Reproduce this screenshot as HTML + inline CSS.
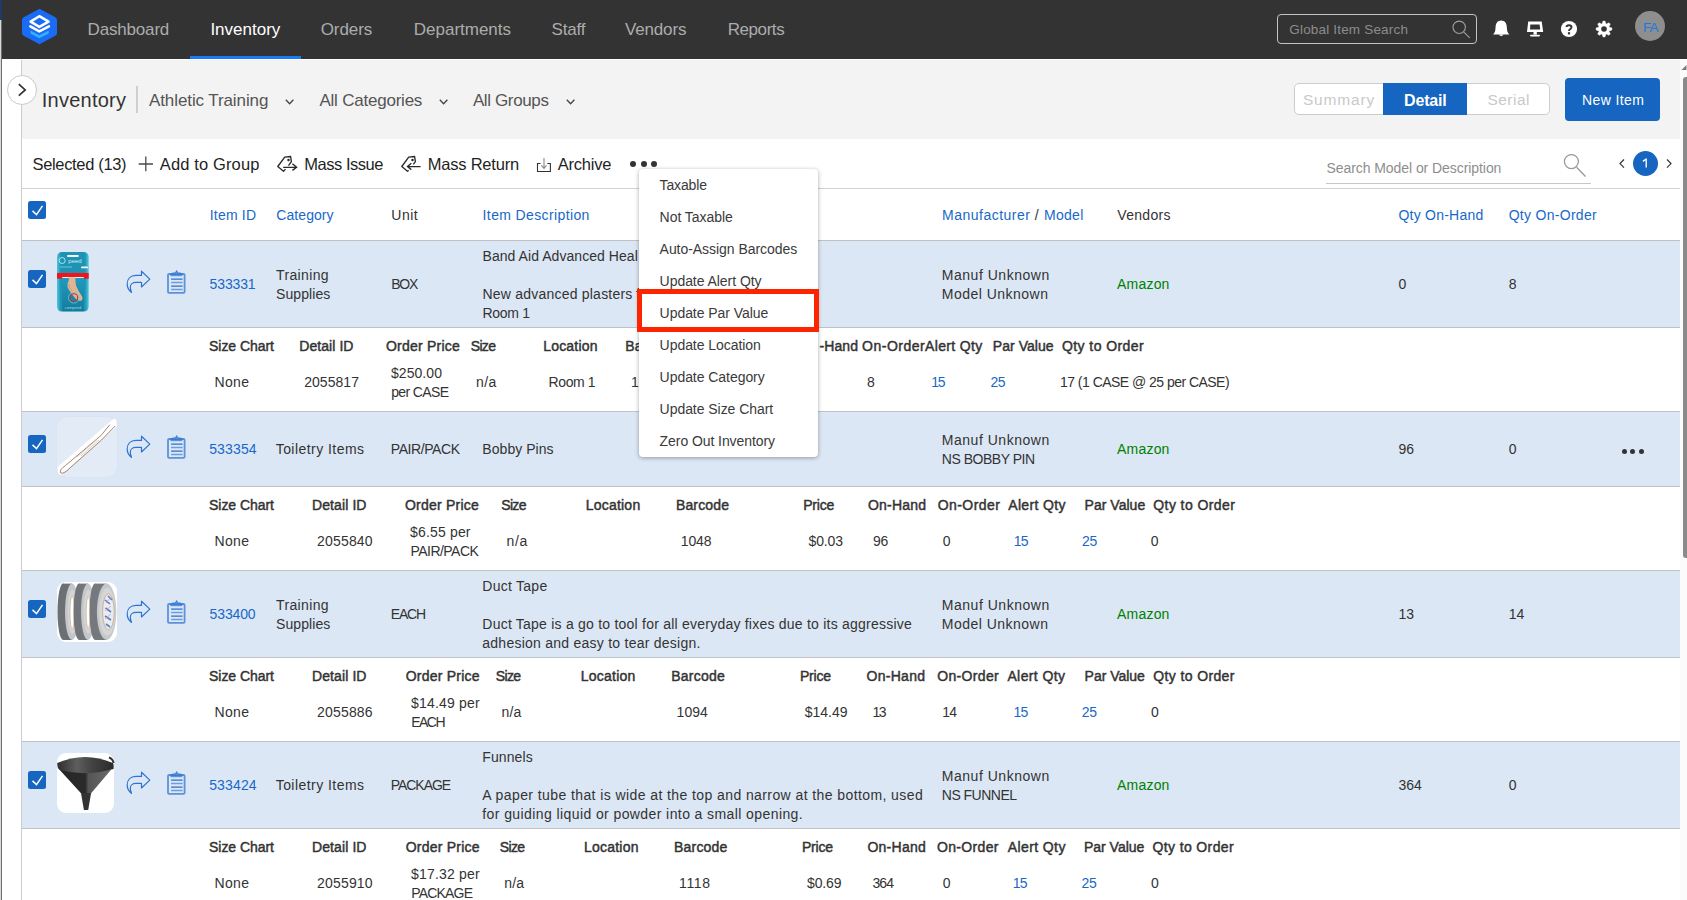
<!DOCTYPE html><html><head><meta charset="utf-8"><style>
html,body{margin:0;padding:0;width:1687px;height:900px;overflow:hidden;background:#fff;}
body{position:relative;font-family:"Liberation Sans", sans-serif;}
.t{position:absolute;white-space:nowrap;line-height:20px;}
.r{position:absolute;box-sizing:border-box;}
svg{position:absolute;overflow:visible;}
</style></head><body>
<div class="r" style="left:0px;top:0px;width:1px;height:900px;background:#d8d8d8;"></div>
<div class="r" style="left:1px;top:0px;width:1px;height:900px;background:#6e6e6e;"></div>
<div class="r" style="left:0px;top:0px;width:2px;height:20px;background:#203a66;"></div>
<div class="r" style="left:2px;top:0px;width:1685px;height:59px;background:#333333;"></div>
<svg style="left:22px;top:8px" width="36" height="37" viewBox="0 0 36 37">
<path d="M17.5 0.8 L33.3 9.2 Q35 10.1 35 12 L35 25 Q35 26.9 33.3 27.8 L17.5 36.2 L1.7 27.8 Q0 26.9 0 25 L0 12 Q0 10.1 1.7 9.2 Z" fill="#1a6cf5"/>
<path d="M8.5 22.4 L17.3 27.2 L26.7 22.4 L26.7 25.4 L17.3 30.2 L8.5 25.4 Z" fill="#35b0ff"/>
<path d="M8.3 18.4 L17.3 23.4 L27 18.4" fill="none" stroke="#fff" stroke-width="2.5" stroke-linejoin="round" stroke-linecap="round"/>
<path d="M17.3 8.2 L26.6 13.6 L17.3 18.9 L8.6 13.6 Z" fill="none" stroke="#fff" stroke-width="2.5" stroke-linejoin="round"/></svg>
<div class="t" style="left:87.60px;top:20px;font-size:17px;color:#acacac;letter-spacing:-0.181px;">Dashboard</div>
<div class="t" style="left:210.40px;top:20px;font-size:17px;color:#ffffff;letter-spacing:0.006px;">Inventory</div>
<div class="t" style="left:320.70px;top:20px;font-size:17px;color:#acacac;letter-spacing:-0.070px;">Orders</div>
<div class="t" style="left:413.80px;top:20px;font-size:17px;color:#acacac;letter-spacing:-0.010px;">Departments</div>
<div class="t" style="left:551.60px;top:20px;font-size:17px;color:#acacac;letter-spacing:-0.200px;">Staff</div>
<div class="t" style="left:625.00px;top:20px;font-size:17px;color:#acacac;letter-spacing:-0.167px;">Vendors</div>
<div class="t" style="left:727.70px;top:20px;font-size:17px;color:#acacac;letter-spacing:-0.425px;">Reports</div>
<div class="r" style="left:190px;top:56px;width:111px;height:3px;background:#1a7cf5;"></div>
<div class="r" style="left:2px;top:59px;width:1685px;height:1px;background:#ffffff;"></div>
<div class="r" style="left:1277px;top:14px;width:200px;height:30px;background:transparent;border:1.5px solid #c4c4c4;border-radius:4px;"></div>
<div class="t" style="left:1289.30px;top:20px;font-size:13.5px;color:#8c8c8c;letter-spacing:0.179px;">Global Item Search</div>
<svg style="left:1450px;top:19px" width="22" height="22" viewBox="0 0 22 22"><circle cx="9.2" cy="8.3" r="6.2" fill="none" stroke="#a0a0a0" stroke-width="1.1"/><path d="M13.6 12.9 L19.8 18.9" stroke="#a0a0a0" stroke-width="1.1"/></svg>
<svg style="left:1492px;top:20px" width="18" height="18" viewBox="0 0 18 18"><path d="M9.2 0.6 C5.5 0.6 3.9 3.5 3.6 6.7 L3.3 10.3 C3.1 12.3 1.9 13.4 1 14.6 L17.4 14.6 C16.5 13.4 15.3 12.3 15.1 10.3 L14.8 6.7 C14.5 3.5 12.9 0.6 9.2 0.6 Z" fill="#fff"/><path d="M6.8 14.5 Q9.2 17.6 11.6 14.5 Z" fill="#fff"/></svg>
<svg style="left:1526px;top:20px" width="18" height="18" viewBox="0 0 18 18"><path d="M2.2 1.5 L15.7 1.5 L17.2 12 L1 12 Z M4.3 4.4 L4 9.5 L14.2 9.5 L13.6 4.4 Z" fill="#fff" fill-rule="evenodd"/><rect x="7.5" y="12" width="3.3" height="2.6" fill="#fff"/><rect x="4" y="14.8" width="10" height="1.6" rx="0.8" fill="#fff"/></svg>
<svg style="left:1560px;top:20px" width="18" height="18" viewBox="0 0 18 18"><circle cx="9" cy="9" r="8.1" fill="#fff"/><path d="M6.5 7 C6.5 4.8 11.5 4.6 11.5 7.2 C11.5 9 9 9 9 10.9" fill="none" stroke="#333" stroke-width="1.9"/><rect x="7.9" y="12.2" width="2.2" height="2.2" fill="#333"/></svg>
<svg style="left:1595px;top:20px" width="18" height="18" viewBox="-9 -9 18 18"><path d="M-1.94 -5.15 L-1.04 -7.93 L1.04 -7.93 L1.94 -5.15 L2.27 -5.01 L4.88 -6.34 L6.34 -4.88 L5.01 -2.27 L5.15 -1.94 L7.93 -1.04 L7.93 1.04 L5.15 1.94 L5.01 2.27 L6.34 4.88 L4.88 6.34 L2.27 5.01 L1.94 5.15 L1.04 7.93 L-1.04 7.93 L-1.94 5.15 L-2.27 5.01 L-4.88 6.34 L-6.34 4.88 L-5.01 2.27 L-5.15 1.94 L-7.93 1.04 L-7.93 -1.04 L-5.15 -1.94 L-5.01 -2.27 L-6.34 -4.88 L-4.88 -6.34 L-2.27 -5.01 Z" fill="#fff" stroke="#fff" stroke-width="0.4" stroke-linejoin="round"/><circle r="2.8" fill="#333"/></svg>
<div class="r" style="left:1635px;top:11px;width:30px;height:30px;border-radius:50%;background:#8e8e8e;"></div>
<div class="t" style="left:1643.10px;top:18px;font-size:13.5px;color:#1f78e0;letter-spacing:-1.200px;">FA</div>
<div class="r" style="left:2px;top:60px;width:19px;height:840px;background:#ffffff;"></div>
<div class="r" style="left:21px;top:60px;width:1px;height:840px;background:#cccccc;"></div>
<div class="r" style="left:22px;top:60px;width:1658px;height:79px;background:#f3f3f3;"></div>
<div class="r" style="left:7px;top:75px;width:30px;height:30px;border-radius:50%;background:#fff;border:1.5px solid #cacaca;"></div>
<svg style="left:17px;top:82px" width="12" height="16" viewBox="0 0 12 16"><path d="M1.8 2.1 L8.2 8 L1.8 13.6" fill="none" stroke="#333" stroke-width="1.7"/></svg>
<div class="t" style="left:41.80px;top:90px;font-size:20px;color:#333333;letter-spacing:0.244px;">Inventory</div>
<div class="r" style="left:136px;top:86px;width:2px;height:27px;background:#cfcfcf;"></div>
<div class="t" style="left:149.00px;top:91px;font-size:17px;color:#555555;letter-spacing:-0.097px;">Athletic Training</div>
<svg style="left:285px;top:99px" width="10" height="7" viewBox="0 0 10 7"><path d="M0.8 0.8 L4.6 4.8 L8.4 0.8" fill="none" stroke="#444" stroke-width="1.3"/></svg>
<div class="t" style="left:319.40px;top:91px;font-size:17px;color:#555555;letter-spacing:-0.219px;">All Categories</div>
<svg style="left:439px;top:99px" width="10" height="7" viewBox="0 0 10 7"><path d="M0.8 0.8 L4.6 4.8 L8.4 0.8" fill="none" stroke="#444" stroke-width="1.3"/></svg>
<div class="t" style="left:472.90px;top:91px;font-size:17px;color:#555555;letter-spacing:-0.372px;">All Groups</div>
<svg style="left:566px;top:99px" width="10" height="7" viewBox="0 0 10 7"><path d="M0.8 0.8 L4.6 4.8 L8.4 0.8" fill="none" stroke="#444" stroke-width="1.3"/></svg>
<div class="r" style="left:1294px;top:83px;width:256px;height:32px;border:1.5px solid #cdcdcd;border-radius:5px;background:#fff;"></div>
<div class="r" style="left:1383px;top:83px;width:84px;height:32px;background:#1565c1;"></div>
<div class="t" style="left:1302.90px;top:90px;font-size:15.5px;color:#c9c9c9;letter-spacing:0.833px;">Summary</div>
<div class="t" style="left:1404.10px;top:91px;font-size:16px;color:#ffffff;font-weight:bold;letter-spacing:-0.170px;">Detail</div>
<div class="t" style="left:1487.40px;top:90px;font-size:15.5px;color:#c9c9c9;letter-spacing:0.490px;">Serial</div>
<div class="r" style="left:1565px;top:78px;width:95px;height:43px;border-radius:4px;background:#1565c1;"></div>
<div class="t" style="left:1582.00px;top:90px;font-size:14px;color:#ffffff;letter-spacing:0.400px;">New Item</div>
<div class="r" style="left:22px;top:188px;width:1658px;height:1px;background:#d2d2d2;"></div>
<div class="t" style="left:32.50px;top:154px;font-size:16.5px;color:#1f1f1f;letter-spacing:-0.338px;">Selected (13)</div>
<svg style="left:138px;top:156px" width="16" height="16" viewBox="0 0 16 16"><path d="M7.8 0.6 V15.2 M0.7 8 H15" stroke="#4a4a4a" stroke-width="1.3"/></svg>
<div class="t" style="left:159.80px;top:154px;font-size:16.5px;color:#1f1f1f;letter-spacing:0.132px;">Add to Group</div>
<svg style="left:274px;top:152px" width="26" height="23" viewBox="0 0 26 23"><path d="M14.5 13.6 L17.4 9.7 L16.6 4.5 L10.7 5.1 L3.8 14.5 L9.5 19.2 L11.5 17.1" fill="none" stroke="#2a2a2a" stroke-width="1.35" stroke-linejoin="round"/><circle cx="14.5" cy="7.9" r="1.25" fill="#2a2a2a"/><path d="M9.2 15.3 H22.6 M18.4 11.8 L22.6 15.3 L18.4 18.4" fill="none" stroke="#2a2a2a" stroke-width="1.35"/></svg>
<div class="t" style="left:304.20px;top:154px;font-size:16.5px;color:#1f1f1f;letter-spacing:-0.461px;">Mass Issue</div>
<svg style="left:398px;top:152px" width="26" height="23" viewBox="0 0 26 23"><path d="M15.3 12.3 L17.4 9.7 L16.6 4.5 L10.7 5.1 L3.8 14.5 L9.5 19.2 L10.7 18.4" fill="none" stroke="#2a2a2a" stroke-width="1.35" stroke-linejoin="round"/><circle cx="14.5" cy="7.9" r="1.25" fill="#2a2a2a"/><path d="M22.6 14.6 H9.5 M13.3 11.3 L9.5 14.6 L13.3 17.6" fill="none" stroke="#2a2a2a" stroke-width="1.35"/></svg>
<div class="t" style="left:427.80px;top:154px;font-size:16.5px;color:#1f1f1f;letter-spacing:-0.225px;">Mass Return</div>
<svg style="left:532px;top:152px" width="24" height="24" viewBox="0 0 24 24"><path d="M8.5 11.5 H5.5 V19.5 H18.4 V11.5 H15.3" fill="none" stroke="#333" stroke-width="1.1"/><path d="M12 6.1 V16.3 M9.3 13.3 L12 16.3 L14.5 13.3" fill="none" stroke="#8a8a8a" stroke-width="1.1"/></svg>
<div class="t" style="left:557.70px;top:154px;font-size:16.5px;color:#1f1f1f;letter-spacing:-0.217px;">Archive</div>
<div class="r" style="left:630px;top:160.7px;width:6px;height:6px;border-radius:50%;background:#333;"></div>
<div class="r" style="left:640.6px;top:160.7px;width:6px;height:6px;border-radius:50%;background:#333;"></div>
<div class="r" style="left:651.3px;top:160.7px;width:6px;height:6px;border-radius:50%;background:#333;"></div>
<div class="t" style="left:1326.50px;top:158px;font-size:14px;color:#8e8e8e;letter-spacing:-0.067px;">Search Model or Description</div>
<div class="r" style="left:1326px;top:183px;width:265px;height:1px;background:#c8c8c8;"></div>
<svg style="left:1560px;top:150px" width="30" height="30" viewBox="0 0 30 30"><circle cx="11.4" cy="11.6" r="7" fill="none" stroke="#9a9a9a" stroke-width="1.3"/><path d="M16.6 17.2 L25.5 26.5" stroke="#9a9a9a" stroke-width="1.3"/></svg>
<svg style="left:1617px;top:157px" width="10" height="14" viewBox="0 0 10 14"><path d="M7 2.5 L3 6.6 L7 10.6" fill="none" stroke="#333" stroke-width="1.2"/></svg>
<div class="r" style="left:1633px;top:151px;width:25px;height:25px;border-radius:50%;background:#1565c1;"></div>
<svg style="left:1640px;top:157px" width="10" height="12" viewBox="0 0 10 12"><path d="M2.9 4.4 L6.2 2 V10.6" fill="none" stroke="#fff" stroke-width="1.35" stroke-linejoin="round"/></svg>
<svg style="left:1664px;top:157px" width="10" height="14" viewBox="0 0 10 14"><path d="M3 2.5 L7 6.6 L3 10.6" fill="none" stroke="#333" stroke-width="1.2"/></svg>
<div class="r" style="left:28px;top:201px;width:18px;height:18px;border-radius:2.5px;background:#1565c1;"></div>
<svg style="left:28px;top:201px" width="18" height="18" viewBox="0 0 18 18"><path d="M4.5 9.9 L8.5 13.6 L14.5 4.9" fill="none" stroke="#fff" stroke-width="1.5"/></svg>
<div class="t" style="left:209.80px;top:205px;font-size:14px;color:#1968c8;letter-spacing:0.183px;">Item ID</div>
<div class="t" style="left:276.30px;top:205px;font-size:14px;color:#1968c8;letter-spacing:0.071px;">Category</div>
<div class="t" style="left:391.30px;top:205px;font-size:14px;color:#333333;letter-spacing:0.500px;">Unit</div>
<div class="t" style="left:482.60px;top:205px;font-size:14px;color:#1968c8;letter-spacing:0.377px;">Item Description</div>
<div class="t" style="left:942.00px;top:205px;font-size:14px;color:#1968c8;letter-spacing:0.500px;">Manufacturer</div>
<div class="t" style="left:1034.80px;top:205px;font-size:14px;color:#333333;">/</div>
<div class="t" style="left:1044.00px;top:205px;font-size:14px;color:#1968c8;letter-spacing:0.287px;">Model</div>
<div class="t" style="left:1117.30px;top:205px;font-size:14px;color:#333333;letter-spacing:0.292px;">Vendors</div>
<div class="t" style="left:1398.50px;top:205px;font-size:14px;color:#1968c8;letter-spacing:0.220px;">Qty On-Hand</div>
<div class="t" style="left:1508.70px;top:205px;font-size:14px;color:#1968c8;letter-spacing:0.291px;">Qty On-Order</div>
<div class="r" style="left:22px;top:241px;width:1658px;height:86px;background:#dce7f5;"></div>
<div class="r" style="left:22px;top:412px;width:1658px;height:74px;background:#dce7f5;"></div>
<div class="r" style="left:22px;top:571px;width:1658px;height:86px;background:#dce7f5;"></div>
<div class="r" style="left:22px;top:742px;width:1658px;height:86px;background:#dce7f5;"></div>
<div class="r" style="left:22px;top:240px;width:1658px;height:1px;background:#c0c2c5;"></div>
<div class="r" style="left:22px;top:327px;width:1658px;height:1px;background:#c0c2c5;"></div>
<div class="r" style="left:22px;top:411px;width:1658px;height:1px;background:#c0c2c5;"></div>
<div class="r" style="left:22px;top:486px;width:1658px;height:1px;background:#c0c2c5;"></div>
<div class="r" style="left:22px;top:570px;width:1658px;height:1px;background:#c0c2c5;"></div>
<div class="r" style="left:22px;top:657px;width:1658px;height:1px;background:#c0c2c5;"></div>
<div class="r" style="left:22px;top:741px;width:1658px;height:1px;background:#c0c2c5;"></div>
<div class="r" style="left:22px;top:828px;width:1658px;height:1px;background:#c0c2c5;"></div>
<div class="r" style="left:28px;top:270px;width:18px;height:18px;border-radius:2.5px;background:#1565c1;"></div>
<svg style="left:28px;top:270px" width="18" height="18" viewBox="0 0 18 18"><path d="M4.5 9.9 L8.5 13.6 L14.5 4.9" fill="none" stroke="#fff" stroke-width="1.5"/></svg>
<svg style="left:56px;top:251px" width="35" height="62" viewBox="0 0 35 62">
<defs><linearGradient id="cg" x1="0" y1="0" x2="1" y2="0"><stop offset="0" stop-color="#4cc9dc"/><stop offset="0.12" stop-color="#1e93b4"/><stop offset="0.88" stop-color="#1e93b4"/><stop offset="1" stop-color="#4cc9dc"/></linearGradient>
<linearGradient id="cp" x1="0" y1="0" x2="0" y2="1"><stop offset="0" stop-color="#1f9cc0"/><stop offset="1" stop-color="#137c9c"/></linearGradient></defs>
<path d="M6.5 1 H27.2 Q32.7 1 32.7 6.5 V55 Q32.7 60.5 27.5 60.5 H6.2 Q1 60.5 1 55 V6.5 Q1 1 6.5 1 Z" fill="url(#cg)"/>
<rect x="1" y="22" width="31.7" height="5.7" fill="#f0141e"/>
<rect x="6.2" y="26.2" width="21.6" height="34" fill="url(#cp)"/>
<rect x="6.2" y="26" width="21.6" height="1" fill="#d8f4f8"/>
<path d="M13.2 26.4 L19.4 26.4 Q19.2 31 20.2 35 Q22.5 40.5 25.5 44.5 Q27.5 47.5 25.5 49.5 Q22.5 50.5 19.5 47.5 Q15.5 43 13 39 Q10.8 36 11.6 32.5 Q12.8 30 13.2 26.4 Z" fill="#e2b592"/><path d="M12.5 33 Q13.5 37 16 40" fill="none" stroke="#c98f6e" stroke-width="0.7"/>
<circle cx="17.8" cy="46.7" r="5.3" fill="none" stroke="#5fd0e0" stroke-width="0.8"/>
<circle cx="17.8" cy="46.7" r="3.9" fill="none" stroke="#d0283a" stroke-width="1.1"/>
<rect x="11" y="4" width="11.8" height="2" rx="1" fill="#f6fcff"/>
<circle cx="6.2" cy="9.5" r="3" fill="none" stroke="#bfeaf2" stroke-width="0.9"/>
<text x="19" y="12" font-size="6" fill="#cdeff5" text-anchor="middle" font-family="Liberation Sans">peed</text>
<rect x="25" y="15.5" width="7" height="1.8" rx="0.8" fill="#f2fbff"/>
<rect x="4" y="15.5" width="12" height="1" fill="#6cc6d8"/>
<text x="17" y="57.5" font-size="4" fill="#9fd9e6" text-anchor="middle" font-family="Liberation Sans">compeed</text></svg>
<svg style="left:122px;top:265px" width="30" height="30" viewBox="0 0 30 30"><path d="M19.5 10.4 L14 10.4 C8.2 10.4 5.2 14 5.2 19 C5.2 23 7.3 25.8 9.5 27.4 C8.6 25.2 8.3 23.6 8.3 22 C8.3 19.2 10.8 17.4 14 17.4 L19.5 17.4 L19.5 22 L27.8 14.1 L19.5 6.2 Z" fill="none" stroke="#2d74d2" stroke-width="1.2" stroke-linejoin="round"/></svg>
<svg style="left:167px;top:270px" width="22" height="26" viewBox="0 0 22 26"><rect x="1" y="4" width="16.6" height="18.8" rx="1" fill="none" stroke="#5b92da" stroke-width="1.8"/><path d="M3.5 4.6 L6.2 3.1 L8.6 3.1 L9.6 0.9 L10.6 3.1 L13 3.1 L15.6 4.6 Z" fill="none" stroke="#3a7dd4" stroke-width="1.2" stroke-linejoin="round"/><path d="M3.5 5.6 H15" stroke="#5b92da" stroke-width="1.2"/><path d="M4.1 9.1 H15.6 M4.1 16.1 H15.6" stroke="#2b6fce" stroke-width="1.1"/><path d="M4.1 12.6 H15.6 M4.1 19.6 H15.6" stroke="#6b9ddd" stroke-width="1.5"/></svg>
<div class="t" style="left:209.60px;top:274px;font-size:14px;color:#1968c8;letter-spacing:-0.140px;">533331</div>
<div class="t" style="left:276.00px;top:265px;font-size:14px;color:#333;letter-spacing:0.364px;">Training</div>
<div class="t" style="left:276.00px;top:284px;font-size:14px;color:#333;letter-spacing:0.086px;">Supplies</div>
<div class="t" style="left:391.20px;top:274px;font-size:14px;color:#333;letter-spacing:-1.225px;">BOX</div>
<div class="t" style="left:482.50px;top:246px;font-size:14px;color:#333;letter-spacing:0.057px;">Band Aid Advanced Heal</div>
<div class="t" style="left:640.00px;top:246px;font-size:14px;color:#333;">ing</div>
<div class="t" style="left:482.50px;top:284px;font-size:14px;color:#333;letter-spacing:0.215px;">New advanced plasters</div>
<div class="t" style="left:636.00px;top:284px;font-size:14px;color:#333;">for</div>
<div class="t" style="left:482.50px;top:303px;font-size:14px;color:#333;letter-spacing:-0.300px;">Room 1</div>
<div class="t" style="left:941.80px;top:265px;font-size:14px;color:#333;letter-spacing:0.521px;">Manuf Unknown</div>
<div class="t" style="left:941.80px;top:284px;font-size:14px;color:#333;letter-spacing:0.483px;">Model Unknown</div>
<div class="t" style="left:1117.00px;top:274px;font-size:14px;color:#008000;letter-spacing:0.210px;">Amazon</div>
<div class="t" style="left:1398.50px;top:274px;font-size:14px;color:#333;">0</div>
<div class="t" style="left:1508.70px;top:274px;font-size:14px;color:#333;">8</div>
<div class="t" style="left:209.10px;top:336px;font-size:14px;color:#333333;-webkit-text-stroke:0.45px #333333;letter-spacing:-0.061px;">Size Chart</div>
<div class="t" style="left:299.30px;top:336px;font-size:14px;color:#333333;-webkit-text-stroke:0.45px #333333;letter-spacing:0.062px;">Detail ID</div>
<div class="t" style="left:385.90px;top:336px;font-size:14px;color:#333333;-webkit-text-stroke:0.45px #333333;letter-spacing:0.235px;">Order Price</div>
<div class="t" style="left:470.70px;top:336px;font-size:14px;color:#333333;-webkit-text-stroke:0.45px #333333;letter-spacing:-0.650px;">Size</div>
<div class="t" style="left:543.20px;top:336px;font-size:14px;color:#333333;-webkit-text-stroke:0.45px #333333;letter-spacing:0.193px;">Location</div>
<div class="t" style="left:625.30px;top:336px;font-size:14px;color:#333333;-webkit-text-stroke:0.45px #333333;letter-spacing:0.092px;">Barcode</div>
<div class="t" style="left:819.40px;top:336px;font-size:14px;color:#333333;-webkit-text-stroke:0.45px #333333;letter-spacing:0.113px;">-Hand</div>
<div class="t" style="left:862.10px;top:336px;font-size:14px;color:#333333;-webkit-text-stroke:0.45px #333333;letter-spacing:0.493px;">On-Order</div>
<div class="t" style="left:925.00px;top:336px;font-size:14px;color:#333333;-webkit-text-stroke:0.45px #333333;letter-spacing:0.344px;">Alert Qty</div>
<div class="t" style="left:992.80px;top:336px;font-size:14px;color:#333333;-webkit-text-stroke:0.45px #333333;letter-spacing:0.044px;">Par Value</div>
<div class="t" style="left:1061.90px;top:336px;font-size:14px;color:#333333;-webkit-text-stroke:0.45px #333333;letter-spacing:0.436px;">Qty to Order</div>
<div class="t" style="left:214.60px;top:372px;font-size:14px;color:#333;letter-spacing:0.317px;">None</div>
<div class="t" style="left:304.20px;top:372px;font-size:14px;color:#333;letter-spacing:0.050px;">2055817</div>
<div class="t" style="left:390.90px;top:363px;font-size:14px;color:#333;letter-spacing:0.083px;">$250.00</div>
<div class="t" style="left:391.20px;top:382px;font-size:14px;color:#333;letter-spacing:-0.636px;">per CASE</div>
<div class="t" style="left:475.90px;top:372px;font-size:14px;color:#333;letter-spacing:0.500px;">n/a</div>
<div class="t" style="left:548.60px;top:372px;font-size:14px;color:#333;letter-spacing:-0.400px;">Room 1</div>
<div class="t" style="left:631.00px;top:372px;font-size:14px;color:#333;">1048</div>
<div class="t" style="left:866.90px;top:372px;font-size:14px;color:#333;">8</div>
<div class="t" style="left:931.30px;top:372px;font-size:14px;color:#1968c8;letter-spacing:-1.450px;">15</div>
<div class="t" style="left:990.60px;top:372px;font-size:14px;color:#1968c8;letter-spacing:-0.750px;">25</div>
<div class="t" style="left:1060.00px;top:372px;font-size:14px;color:#333;letter-spacing:-0.529px;">17 (1 CASE @ 25 per CASE)</div>
<div class="r" style="left:28px;top:435px;width:18px;height:18px;border-radius:2.5px;background:#1565c1;"></div>
<svg style="left:28px;top:435px" width="18" height="18" viewBox="0 0 18 18"><path d="M4.5 9.9 L8.5 13.6 L14.5 4.9" fill="none" stroke="#fff" stroke-width="1.5"/></svg>
<div class="r" style="left:57px;top:417px;width:60px;height:60px;border-radius:9px;background:#e3ebf6;box-shadow:0 0 1px rgba(0,0,0,0.08);"></div>
<svg style="left:57px;top:417px" width="60" height="60" viewBox="0 0 60 60"><path d="M0.6 50 L56 2.2 Q58.5 1 59.5 4 L59.8 9.5 L4.6 57.6 Q1.6 58.5 0.6 55 Z" fill="#ffffff"/><path d="M52.9 7.6 L44 18.5 L8.5 48.5 Q2.5 52.5 3.4 55.8 Q5.5 57.2 9 54.5 L44.5 23 L58.2 9" fill="none" stroke="#9a7b62" stroke-width="0.9"/><path d="M20 40 L40 22.5 M24 39 L42 23" stroke="#c9b8a8" stroke-width="0.7"/></svg>
<svg style="left:122px;top:430px" width="30" height="30" viewBox="0 0 30 30"><path d="M19.5 10.4 L14 10.4 C8.2 10.4 5.2 14 5.2 19 C5.2 23 7.3 25.8 9.5 27.4 C8.6 25.2 8.3 23.6 8.3 22 C8.3 19.2 10.8 17.4 14 17.4 L19.5 17.4 L19.5 22 L27.8 14.1 L19.5 6.2 Z" fill="none" stroke="#2d74d2" stroke-width="1.2" stroke-linejoin="round"/></svg>
<svg style="left:167px;top:435px" width="22" height="26" viewBox="0 0 22 26"><rect x="1" y="4" width="16.6" height="18.8" rx="1" fill="none" stroke="#5b92da" stroke-width="1.8"/><path d="M3.5 4.6 L6.2 3.1 L8.6 3.1 L9.6 0.9 L10.6 3.1 L13 3.1 L15.6 4.6 Z" fill="none" stroke="#3a7dd4" stroke-width="1.2" stroke-linejoin="round"/><path d="M3.5 5.6 H15" stroke="#5b92da" stroke-width="1.2"/><path d="M4.1 9.1 H15.6 M4.1 16.1 H15.6" stroke="#2b6fce" stroke-width="1.1"/><path d="M4.1 12.6 H15.6 M4.1 19.6 H15.6" stroke="#6b9ddd" stroke-width="1.5"/></svg>
<div class="t" style="left:209.20px;top:439px;font-size:14px;color:#1968c8;letter-spacing:0.140px;">533354</div>
<div class="t" style="left:275.70px;top:439px;font-size:14px;color:#333;letter-spacing:0.450px;">Toiletry Items</div>
<div class="t" style="left:390.80px;top:439px;font-size:14px;color:#333;letter-spacing:-0.425px;">PAIR/PACK</div>
<div class="t" style="left:482.30px;top:439px;font-size:14px;color:#333;letter-spacing:0.056px;">Bobby Pins</div>
<div class="t" style="left:941.80px;top:430px;font-size:14px;color:#333;letter-spacing:0.521px;">Manuf Unknown</div>
<div class="t" style="left:941.80px;top:449px;font-size:14px;color:#333;letter-spacing:-0.486px;">NS BOBBY PIN</div>
<div class="t" style="left:1117.00px;top:439px;font-size:14px;color:#008000;letter-spacing:0.210px;">Amazon</div>
<div class="t" style="left:1398.50px;top:439px;font-size:14px;color:#333;">96</div>
<div class="t" style="left:1508.70px;top:439px;font-size:14px;color:#333;">0</div>
<div class="r" style="left:1622.0px;top:448.5px;width:5px;height:5px;border-radius:50%;background:#333;"></div>
<div class="r" style="left:1629.9px;top:448.5px;width:5px;height:5px;border-radius:50%;background:#333;"></div>
<div class="r" style="left:1639.0px;top:448.5px;width:5px;height:5px;border-radius:50%;background:#333;"></div>
<div class="t" style="left:209.10px;top:495px;font-size:14px;color:#333333;-webkit-text-stroke:0.45px #333333;letter-spacing:-0.061px;">Size Chart</div>
<div class="t" style="left:312.00px;top:495px;font-size:14px;color:#333333;-webkit-text-stroke:0.45px #333333;letter-spacing:0.100px;">Detail ID</div>
<div class="t" style="left:405.00px;top:495px;font-size:14px;color:#333333;-webkit-text-stroke:0.45px #333333;letter-spacing:0.225px;">Order Price</div>
<div class="t" style="left:501.20px;top:495px;font-size:14px;color:#333333;-webkit-text-stroke:0.45px #333333;letter-spacing:-0.650px;">Size</div>
<div class="t" style="left:585.70px;top:495px;font-size:14px;color:#333333;-webkit-text-stroke:0.45px #333333;letter-spacing:0.221px;">Location</div>
<div class="t" style="left:675.90px;top:495px;font-size:14px;color:#333333;-webkit-text-stroke:0.45px #333333;letter-spacing:0.158px;">Barcode</div>
<div class="t" style="left:803.20px;top:495px;font-size:14px;color:#333333;-webkit-text-stroke:0.45px #333333;letter-spacing:-0.175px;">Price</div>
<div class="t" style="left:868.00px;top:495px;font-size:14px;color:#333333;-webkit-text-stroke:0.45px #333333;letter-spacing:0.200px;">On-Hand</div>
<div class="t" style="left:937.70px;top:495px;font-size:14px;color:#333333;-webkit-text-stroke:0.45px #333333;letter-spacing:0.436px;">On-Order</div>
<div class="t" style="left:1008.20px;top:495px;font-size:14px;color:#333333;-webkit-text-stroke:0.45px #333333;letter-spacing:0.356px;">Alert Qty</div>
<div class="t" style="left:1084.60px;top:495px;font-size:14px;color:#333333;-webkit-text-stroke:0.45px #333333;letter-spacing:0.019px;">Par Value</div>
<div class="t" style="left:1153.30px;top:495px;font-size:14px;color:#333333;-webkit-text-stroke:0.45px #333333;letter-spacing:0.409px;">Qty to Order</div>
<div class="t" style="left:214.60px;top:531px;font-size:14px;color:#333;letter-spacing:0.317px;">None</div>
<div class="t" style="left:317.00px;top:531px;font-size:14px;color:#333;letter-spacing:0.183px;">2055840</div>
<div class="t" style="left:410.00px;top:522px;font-size:14px;color:#333;letter-spacing:0.169px;">$6.55 per</div>
<div class="t" style="left:410.50px;top:541px;font-size:14px;color:#333;letter-spacing:-0.537px;">PAIR/PACK</div>
<div class="t" style="left:506.60px;top:531px;font-size:14px;color:#333;letter-spacing:0.600px;">n/a</div>
<div class="t" style="left:680.80px;top:531px;font-size:14px;color:#333;letter-spacing:-0.150px;">1048</div>
<div class="t" style="left:808.50px;top:531px;font-size:14px;color:#333;letter-spacing:-0.137px;">$0.03</div>
<div class="t" style="left:873.00px;top:531px;font-size:14px;color:#333;letter-spacing:-0.350px;">96</div>
<div class="t" style="left:942.70px;top:531px;font-size:14px;color:#333;">0</div>
<div class="t" style="left:1013.70px;top:531px;font-size:14px;color:#1968c8;letter-spacing:-0.750px;">15</div>
<div class="t" style="left:1082.00px;top:531px;font-size:14px;color:#1968c8;letter-spacing:-0.250px;">25</div>
<div class="t" style="left:1150.80px;top:531px;font-size:14px;color:#333;">0</div>
<div class="r" style="left:28px;top:600px;width:18px;height:18px;border-radius:2.5px;background:#1565c1;"></div>
<svg style="left:28px;top:600px" width="18" height="18" viewBox="0 0 18 18"><path d="M4.5 9.9 L8.5 13.6 L14.5 4.9" fill="none" stroke="#fff" stroke-width="1.5"/></svg>
<div class="r" style="left:57px;top:582px;width:60px;height:60px;border-radius:9px;background:#ffffff;"></div>
<svg style="left:57px;top:582px" width="60" height="60" viewBox="0 0 60 60">
<g>
<ellipse cx="6" cy="29.8" rx="5.5" ry="28.2" fill="#6c7075"/><rect x="6" y="1.6" width="9" height="56.4" fill="#6c7075"/>
<ellipse cx="15" cy="29.8" rx="7" ry="28.2" fill="#c4c6c8"/><ellipse cx="15.5" cy="29.8" rx="5" ry="22" fill="#d2d4d6"/><ellipse cx="15.2" cy="30.5" rx="2.2" ry="16.5" fill="#ffffff" stroke="#c9a67c" stroke-width="0.6"/>
<ellipse cx="22" cy="29.8" rx="5.5" ry="28.2" fill="#72767b"/><rect x="22" y="1.6" width="8.9" height="56.4" fill="#72767b"/>
<ellipse cx="30.9" cy="29.8" rx="6.9" ry="28.2" fill="#c4c6c8"/><ellipse cx="31.4" cy="29.8" rx="5" ry="22" fill="#d2d4d6"/><ellipse cx="31.2" cy="30.5" rx="2" ry="16" fill="#ffffff" stroke="#c9a67c" stroke-width="0.6"/>
<ellipse cx="38" cy="29.8" rx="5.5" ry="28.2" fill="#75797e"/><rect x="38" y="1.6" width="11.6" height="56.4" fill="#75797e"/>
<ellipse cx="49.6" cy="29.8" rx="9.7" ry="28.2" fill="#c6c8ca"/><ellipse cx="50.2" cy="29.8" rx="8" ry="24" fill="#d4d6d8"/>
<ellipse cx="51.4" cy="29.8" rx="5.8" ry="18" fill="#e8ecf4" stroke="#c9a67c" stroke-width="0.8"/>
<path d="M48 18 L53 22 M48.5 26 L54 30 M48 34 L54 38 M49 42 L53 45 M51 14 L55 18" stroke="#5c7fc0" stroke-width="1.6"/>
<path d="M53 16 L49 21 M54 24 L48 29 M54 32 L48 37" stroke="#d79ab0" stroke-width="0.8"/>
</g></svg>
<svg style="left:122px;top:595px" width="30" height="30" viewBox="0 0 30 30"><path d="M19.5 10.4 L14 10.4 C8.2 10.4 5.2 14 5.2 19 C5.2 23 7.3 25.8 9.5 27.4 C8.6 25.2 8.3 23.6 8.3 22 C8.3 19.2 10.8 17.4 14 17.4 L19.5 17.4 L19.5 22 L27.8 14.1 L19.5 6.2 Z" fill="none" stroke="#2d74d2" stroke-width="1.2" stroke-linejoin="round"/></svg>
<svg style="left:167px;top:600px" width="22" height="26" viewBox="0 0 22 26"><rect x="1" y="4" width="16.6" height="18.8" rx="1" fill="none" stroke="#5b92da" stroke-width="1.8"/><path d="M3.5 4.6 L6.2 3.1 L8.6 3.1 L9.6 0.9 L10.6 3.1 L13 3.1 L15.6 4.6 Z" fill="none" stroke="#3a7dd4" stroke-width="1.2" stroke-linejoin="round"/><path d="M3.5 5.6 H15" stroke="#5b92da" stroke-width="1.2"/><path d="M4.1 9.1 H15.6 M4.1 16.1 H15.6" stroke="#2b6fce" stroke-width="1.1"/><path d="M4.1 12.6 H15.6 M4.1 19.6 H15.6" stroke="#6b9ddd" stroke-width="1.5"/></svg>
<div class="t" style="left:209.60px;top:604px;font-size:14px;color:#1968c8;letter-spacing:-0.140px;">533400</div>
<div class="t" style="left:276.00px;top:595px;font-size:14px;color:#333;letter-spacing:0.364px;">Training</div>
<div class="t" style="left:276.00px;top:614px;font-size:14px;color:#333;letter-spacing:0.086px;">Supplies</div>
<div class="t" style="left:390.80px;top:604px;font-size:14px;color:#333;letter-spacing:-1.233px;">EACH</div>
<div class="t" style="left:482.30px;top:576px;font-size:14px;color:#333;letter-spacing:0.263px;">Duct Tape</div>
<div class="t" style="left:482.30px;top:614px;font-size:14px;color:#333;letter-spacing:0.228px;">Duct Tape is a go to tool for all everyday fixes due to its aggressive</div>
<div class="t" style="left:482.30px;top:633px;font-size:14px;color:#333;letter-spacing:0.248px;">adhesion and easy to tear design.</div>
<div class="t" style="left:941.80px;top:595px;font-size:14px;color:#333;letter-spacing:0.521px;">Manuf Unknown</div>
<div class="t" style="left:941.80px;top:614px;font-size:14px;color:#333;letter-spacing:0.483px;">Model Unknown</div>
<div class="t" style="left:1117.00px;top:604px;font-size:14px;color:#008000;letter-spacing:0.210px;">Amazon</div>
<div class="t" style="left:1398.50px;top:604px;font-size:14px;color:#333;">13</div>
<div class="t" style="left:1508.70px;top:604px;font-size:14px;color:#333;">14</div>
<div class="t" style="left:209.10px;top:666px;font-size:14px;color:#333333;-webkit-text-stroke:0.45px #333333;letter-spacing:-0.061px;">Size Chart</div>
<div class="t" style="left:312.00px;top:666px;font-size:14px;color:#333333;-webkit-text-stroke:0.45px #333333;letter-spacing:0.100px;">Detail ID</div>
<div class="t" style="left:405.70px;top:666px;font-size:14px;color:#333333;-webkit-text-stroke:0.45px #333333;letter-spacing:0.235px;">Order Price</div>
<div class="t" style="left:495.80px;top:666px;font-size:14px;color:#333333;-webkit-text-stroke:0.45px #333333;letter-spacing:-0.683px;">Size</div>
<div class="t" style="left:580.80px;top:666px;font-size:14px;color:#333333;-webkit-text-stroke:0.45px #333333;letter-spacing:0.221px;">Location</div>
<div class="t" style="left:671.30px;top:666px;font-size:14px;color:#333333;-webkit-text-stroke:0.45px #333333;letter-spacing:0.208px;">Barcode</div>
<div class="t" style="left:800.00px;top:666px;font-size:14px;color:#333333;-webkit-text-stroke:0.45px #333333;letter-spacing:-0.225px;">Price</div>
<div class="t" style="left:866.60px;top:666px;font-size:14px;color:#333333;-webkit-text-stroke:0.45px #333333;letter-spacing:0.267px;">On-Hand</div>
<div class="t" style="left:937.20px;top:666px;font-size:14px;color:#333333;-webkit-text-stroke:0.45px #333333;letter-spacing:0.336px;">On-Order</div>
<div class="t" style="left:1007.40px;top:666px;font-size:14px;color:#333333;-webkit-text-stroke:0.45px #333333;letter-spacing:0.394px;">Alert Qty</div>
<div class="t" style="left:1084.60px;top:666px;font-size:14px;color:#333333;-webkit-text-stroke:0.45px #333333;letter-spacing:-0.019px;">Par Value</div>
<div class="t" style="left:1153.30px;top:666px;font-size:14px;color:#333333;-webkit-text-stroke:0.45px #333333;letter-spacing:0.373px;">Qty to Order</div>
<div class="t" style="left:214.60px;top:702px;font-size:14px;color:#333;letter-spacing:0.317px;">None</div>
<div class="t" style="left:317.00px;top:702px;font-size:14px;color:#333;letter-spacing:0.183px;">2055886</div>
<div class="t" style="left:411.00px;top:693px;font-size:14px;color:#333;letter-spacing:0.183px;">$14.49 per</div>
<div class="t" style="left:411.20px;top:712px;font-size:14px;color:#333;letter-spacing:-1.500px;">EACH</div>
<div class="t" style="left:501.50px;top:702px;font-size:14px;color:#333;letter-spacing:0.200px;">n/a</div>
<div class="t" style="left:676.60px;top:702px;font-size:14px;color:#333;letter-spacing:0.017px;">1094</div>
<div class="t" style="left:804.70px;top:702px;font-size:14px;color:#333;letter-spacing:0.020px;">$14.49</div>
<div class="t" style="left:872.40px;top:702px;font-size:14px;color:#333;letter-spacing:-1.350px;">13</div>
<div class="t" style="left:942.30px;top:702px;font-size:14px;color:#333;letter-spacing:-0.750px;">14</div>
<div class="t" style="left:1013.50px;top:702px;font-size:14px;color:#1968c8;letter-spacing:-0.750px;">15</div>
<div class="t" style="left:1081.70px;top:702px;font-size:14px;color:#1968c8;letter-spacing:-0.250px;">25</div>
<div class="t" style="left:1151.00px;top:702px;font-size:14px;color:#333;">0</div>
<div class="r" style="left:28px;top:771px;width:18px;height:18px;border-radius:2.5px;background:#1565c1;"></div>
<svg style="left:28px;top:771px" width="18" height="18" viewBox="0 0 18 18"><path d="M4.5 9.9 L8.5 13.6 L14.5 4.9" fill="none" stroke="#fff" stroke-width="1.5"/></svg>
<div class="r" style="left:57px;top:753px;width:57px;height:60px;border-radius:9px;background:#ffffff;"></div>
<svg style="left:57px;top:753px" width="57" height="60" viewBox="0 0 57 60">
<defs><linearGradient id="fg" x1="0" y1="0" x2="1" y2="0"><stop offset="0" stop-color="#262626"/><stop offset="0.5" stop-color="#2a2a2a"/><stop offset="0.56" stop-color="#555"/><stop offset="1" stop-color="#6a6a6a"/></linearGradient>
<linearGradient id="fr" x1="0" y1="0" x2="1" y2="0"><stop offset="0" stop-color="#2e2e2e"/><stop offset="0.35" stop-color="#5e5e5e"/><stop offset="0.6" stop-color="#444"/><stop offset="1" stop-color="#2a2a2a"/></linearGradient></defs>
<path d="M2.3 16.5 L24 40.3 L34.1 40.3 L54.3 16.5 Z" fill="url(#fg)"/>
<path d="M24 40 L26.9 57 L31.2 57 L34.1 40 Z" fill="#333"/>
<path d="M0.2 10 Q0 15 2.5 17 Q28 24 56.5 16 Q57 12 56 10 Q28 -2 0.2 10 Z" fill="url(#fr)"/>
<path d="M52 4.5 Q56 6 56.5 10" fill="none" stroke="#333" stroke-width="2"/></svg>
<svg style="left:122px;top:766px" width="30" height="30" viewBox="0 0 30 30"><path d="M19.5 10.4 L14 10.4 C8.2 10.4 5.2 14 5.2 19 C5.2 23 7.3 25.8 9.5 27.4 C8.6 25.2 8.3 23.6 8.3 22 C8.3 19.2 10.8 17.4 14 17.4 L19.5 17.4 L19.5 22 L27.8 14.1 L19.5 6.2 Z" fill="none" stroke="#2d74d2" stroke-width="1.2" stroke-linejoin="round"/></svg>
<svg style="left:167px;top:771px" width="22" height="26" viewBox="0 0 22 26"><rect x="1" y="4" width="16.6" height="18.8" rx="1" fill="none" stroke="#5b92da" stroke-width="1.8"/><path d="M3.5 4.6 L6.2 3.1 L8.6 3.1 L9.6 0.9 L10.6 3.1 L13 3.1 L15.6 4.6 Z" fill="none" stroke="#3a7dd4" stroke-width="1.2" stroke-linejoin="round"/><path d="M3.5 5.6 H15" stroke="#5b92da" stroke-width="1.2"/><path d="M4.1 9.1 H15.6 M4.1 16.1 H15.6" stroke="#2b6fce" stroke-width="1.1"/><path d="M4.1 12.6 H15.6 M4.1 19.6 H15.6" stroke="#6b9ddd" stroke-width="1.5"/></svg>
<div class="t" style="left:209.20px;top:775px;font-size:14px;color:#1968c8;letter-spacing:0.140px;">533424</div>
<div class="t" style="left:275.70px;top:775px;font-size:14px;color:#333;letter-spacing:0.450px;">Toiletry Items</div>
<div class="t" style="left:390.80px;top:775px;font-size:14px;color:#333;letter-spacing:-1.058px;">PACKAGE</div>
<div class="t" style="left:482.30px;top:747px;font-size:14px;color:#333;letter-spacing:0.100px;">Funnels</div>
<div class="t" style="left:482.30px;top:785px;font-size:14px;color:#333;letter-spacing:0.411px;">A paper tube that is wide at the top and narrow at the bottom, used</div>
<div class="t" style="left:482.30px;top:804px;font-size:14px;color:#333;letter-spacing:0.408px;">for guiding liquid or powder into a small opening.</div>
<div class="t" style="left:941.80px;top:766px;font-size:14px;color:#333;letter-spacing:0.521px;">Manuf Unknown</div>
<div class="t" style="left:941.80px;top:785px;font-size:14px;color:#333;letter-spacing:-0.519px;">NS FUNNEL</div>
<div class="t" style="left:1117.00px;top:775px;font-size:14px;color:#008000;letter-spacing:0.210px;">Amazon</div>
<div class="t" style="left:1398.50px;top:775px;font-size:14px;color:#333;">364</div>
<div class="t" style="left:1508.70px;top:775px;font-size:14px;color:#333;">0</div>
<div class="t" style="left:209.10px;top:837px;font-size:14px;color:#333333;-webkit-text-stroke:0.45px #333333;letter-spacing:-0.061px;">Size Chart</div>
<div class="t" style="left:312.00px;top:837px;font-size:14px;color:#333333;-webkit-text-stroke:0.45px #333333;letter-spacing:0.100px;">Detail ID</div>
<div class="t" style="left:405.70px;top:837px;font-size:14px;color:#333333;-webkit-text-stroke:0.45px #333333;letter-spacing:0.235px;">Order Price</div>
<div class="t" style="left:499.80px;top:837px;font-size:14px;color:#333333;-webkit-text-stroke:0.45px #333333;letter-spacing:-0.683px;">Size</div>
<div class="t" style="left:584.00px;top:837px;font-size:14px;color:#333333;-webkit-text-stroke:0.45px #333333;letter-spacing:0.221px;">Location</div>
<div class="t" style="left:674.00px;top:837px;font-size:14px;color:#333333;-webkit-text-stroke:0.45px #333333;letter-spacing:0.208px;">Barcode</div>
<div class="t" style="left:802.00px;top:837px;font-size:14px;color:#333333;-webkit-text-stroke:0.45px #333333;letter-spacing:-0.225px;">Price</div>
<div class="t" style="left:867.40px;top:837px;font-size:14px;color:#333333;-webkit-text-stroke:0.45px #333333;letter-spacing:0.267px;">On-Hand</div>
<div class="t" style="left:937.00px;top:837px;font-size:14px;color:#333333;-webkit-text-stroke:0.45px #333333;letter-spacing:0.336px;">On-Order</div>
<div class="t" style="left:1007.80px;top:837px;font-size:14px;color:#333333;-webkit-text-stroke:0.45px #333333;letter-spacing:0.394px;">Alert Qty</div>
<div class="t" style="left:1084.00px;top:837px;font-size:14px;color:#333333;-webkit-text-stroke:0.45px #333333;letter-spacing:-0.019px;">Par Value</div>
<div class="t" style="left:1152.50px;top:837px;font-size:14px;color:#333333;-webkit-text-stroke:0.45px #333333;letter-spacing:0.373px;">Qty to Order</div>
<div class="t" style="left:214.60px;top:873px;font-size:14px;color:#333;letter-spacing:0.317px;">None</div>
<div class="t" style="left:317.00px;top:873px;font-size:14px;color:#333;letter-spacing:0.183px;">2055910</div>
<div class="t" style="left:411.00px;top:864px;font-size:14px;color:#333;letter-spacing:0.183px;">$17.32 per</div>
<div class="t" style="left:411.20px;top:883px;font-size:14px;color:#333;letter-spacing:-0.808px;">PACKAGE</div>
<div class="t" style="left:504.30px;top:873px;font-size:14px;color:#333;letter-spacing:0.200px;">n/a</div>
<div class="t" style="left:679.00px;top:873px;font-size:14px;color:#333;letter-spacing:0.650px;">1118</div>
<div class="t" style="left:807.00px;top:873px;font-size:14px;color:#333;letter-spacing:-0.137px;">$0.69</div>
<div class="t" style="left:872.40px;top:873px;font-size:14px;color:#333;letter-spacing:-0.875px;">364</div>
<div class="t" style="left:942.70px;top:873px;font-size:14px;color:#333;">0</div>
<div class="t" style="left:1012.80px;top:873px;font-size:14px;color:#1968c8;letter-spacing:-0.750px;">15</div>
<div class="t" style="left:1081.50px;top:873px;font-size:14px;color:#1968c8;letter-spacing:-0.250px;">25</div>
<div class="t" style="left:1151.00px;top:873px;font-size:14px;color:#333;">0</div>
<div class="r" style="left:1680px;top:60px;width:7px;height:840px;background:#fbfbfb;"></div>
<svg style="left:1681px;top:65px" width="6" height="6" viewBox="0 0 6 6"><path d="M0.5 5 L5.5 0 L5.5 5 Z" fill="#7a7a7a"/></svg>
<div class="r" style="left:1683px;top:77px;width:6px;height:481px;border-radius:3px;background:#8a8a8a;"></div>
<div class="r" style="left:639px;top:169px;width:179px;height:288px;background:#fff;border-radius:4px;box-shadow:0 1px 4px rgba(0,0,0,0.35);"></div>
<div class="t" style="left:659.60px;top:175px;font-size:14px;color:#3a3a3a;letter-spacing:-0.142px;">Taxable</div>
<div class="t" style="left:659.60px;top:207px;font-size:14px;color:#3a3a3a;letter-spacing:-0.050px;">Not Taxable</div>
<div class="t" style="left:659.60px;top:239px;font-size:14px;color:#3a3a3a;letter-spacing:-0.047px;">Auto-Assign Barcodes</div>
<div class="t" style="left:659.60px;top:271px;font-size:14px;color:#3a3a3a;letter-spacing:-0.050px;">Update Alert Qty</div>
<div class="t" style="left:659.60px;top:303px;font-size:14px;color:#3a3a3a;letter-spacing:-0.050px;">Update Par Value</div>
<div class="t" style="left:659.60px;top:335px;font-size:14px;color:#3a3a3a;letter-spacing:-0.050px;">Update Location</div>
<div class="t" style="left:659.60px;top:367px;font-size:14px;color:#3a3a3a;letter-spacing:-0.050px;">Update Category</div>
<div class="t" style="left:659.60px;top:399px;font-size:14px;color:#3a3a3a;letter-spacing:-0.050px;">Update Size Chart</div>
<div class="t" style="left:659.60px;top:431px;font-size:14px;color:#3a3a3a;letter-spacing:-0.071px;">Zero Out Inventory</div>
<div class="r" style="left:637px;top:289px;width:182px;height:43px;border:5px solid #ff2400;"></div>
</body></html>
